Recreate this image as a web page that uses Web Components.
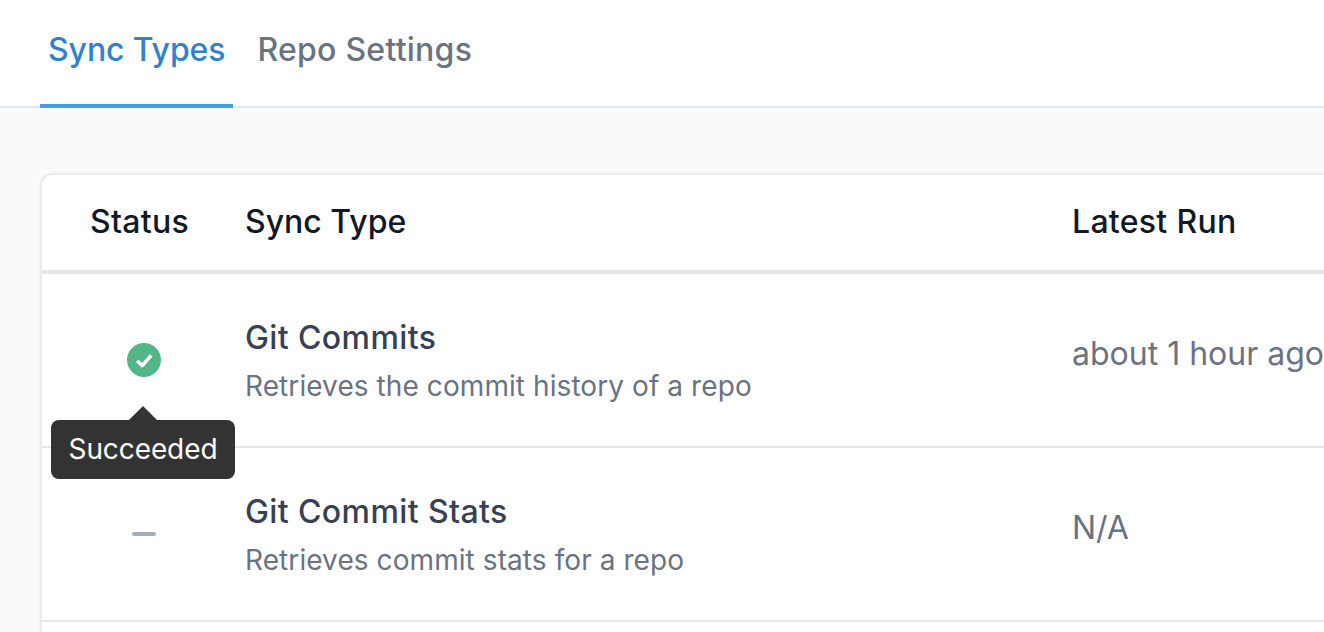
<!DOCTYPE html>
<html>
<head>
<meta charset="utf-8">
<title>Sync Types</title>
<style>
    html, body { margin: 0; height: 100%; overflow: hidden; }
    body { background: #f9fafb; font-family: Inter, "Liberation Sans", sans-serif; }
</style>
</head>
<body>
<sync-tabs>
    <sync-tab active>Sync Types</sync-tab>
    <sync-tab>Repo Settings</sync-tab>
</sync-tabs>
<sync-table>
    <sync-row status="ok" title="Git Commits" desc="Retrieves the commit history of a repo" run="about 1 hour ago"></sync-row>
    <sync-row status="none" title="Git Commit Stats" desc="Retrieves commit stats for a repo" run="N/A"></sync-row>
    <sync-row></sync-row>
</sync-table>
<script>
class SyncTabs extends HTMLElement {
    constructor() {
        super();
        this.attachShadow({mode: 'open'}).innerHTML = `
            <style>
                :host { display: flex; box-sizing: border-box; height: 108px; padding-left: 40px; background: #fff; border-bottom: 2px solid #e5e7eb; }
            </style>
            <slot></slot>
        `;
    }
}
customElements.define('sync-tabs', SyncTabs);

class SyncTab extends HTMLElement {
    constructor() {
        super();
        this.attachShadow({mode: 'open'}).innerHTML = `
            <style>
                :host { display: block; box-sizing: border-box; height: 108px; padding: 30px 8px 0 8px; font-size: 32px; line-height: 40px; font-weight: 500; letter-spacing: .25px; color: #6b7280; white-space: nowrap; }
                :host([active]) { color: #3182ce; border-bottom: 4px solid #41a1e3; margin-right: 16px; letter-spacing: -.1px; }
            </style>
            <slot></slot>
        `;
    }
}
customElements.define('sync-tab', SyncTab);

class SyncTable extends HTMLElement {
    constructor() {
        super();
        this.attachShadow({mode: 'open'}).innerHTML = `
            <style>
                :host { display: block; box-sizing: border-box; width: 1400px; margin: 65px 0 0 40px; background: #fff; border: 2px solid #e9ebef; border-right: 0; border-radius: 12px 0 0 0; box-shadow: 0 0 3px rgba(0, 0, 0, .05); }
                header { display: grid; grid-template-columns: 203px 827px 1fr; box-sizing: border-box; height: 99px; border-bottom: 4px solid #e5e7eb; font-size: 32px; line-height: 94px; font-weight: 500; color: #111827; }
                .status { padding-left: 48px; letter-spacing: .3px; }
                .latest { letter-spacing: .3px; }
            </style>
            <header>
                <div class="status">Status</div>
                <div>Sync Type</div>
                <div class="latest">Latest Run</div>
            </header>
            <slot></slot>
        `;
    }
}
customElements.define('sync-table', SyncTable);

class SyncRow extends HTMLElement {
    constructor() {
        super();
        this.attachShadow({mode: 'open'});
    }
    connectedCallback() {
        const status = this.getAttribute('status');
        const title = this.getAttribute('title') || '';
        const desc = this.getAttribute('desc') || '';
        const run = this.getAttribute('run') || '';
        this.removeAttribute('title');
        let icon = '';
        if (status === 'ok') {
            icon = `<svg width="34" height="34" viewBox="0 0 34 34"><circle cx="17" cy="17" r="17" fill="#52b686"/><path d="M10.2 17.8l5.1 4.8L24.2 12.4" fill="none" stroke="#fff" stroke-width="3.6" stroke-linejoin="round"/></svg><status-tip>Succeeded</status-tip>`;
        } else if (status === 'none') {
            icon = `<div class="dash"></div>`;
        }
        this.shadowRoot.innerHTML = `
            <style>
                :host { display: grid; grid-template-columns: 203px 827px 1fr; box-sizing: border-box; height: 174px; border-bottom: 2px solid #e5e7eb; align-items: center; }
                .icon { position: relative; display: flex; justify-content: center; align-items: center; width: 204px; height: 34px; }
                svg { display: block; }
                .dash { width: 24px; height: 4px; border-radius: 2px; background: #a0aec0; }
                .info { margin-top: 4px; }
                .title { font-size: 32px; line-height: 40px; font-weight: 500; letter-spacing: .4px; color: #374151; }
                .desc { margin-top: 8px; font-size: 28px; line-height: 40px; letter-spacing: .08px; color: #6b7280; }
                .run { margin-top: -12px; font-size: 32px; line-height: 40px; color: #6b7280; white-space: nowrap; }
            </style>
            <div class="icon">${icon}</div>
            <div class="info">
                <div class="title">${title}</div>
                <div class="desc">${desc}</div>
            </div>
            <div class="run">${run}</div>
        `;
    }
}
customElements.define('sync-row', SyncRow);

class StatusTip extends HTMLElement {
    constructor() {
        super();
        this.attachShadow({mode: 'open'}).innerHTML = `
            <style>
                :host { position: absolute; top: 77px; left: 9px; z-index: 2; box-sizing: border-box; width: 184px; height: 59px; border-radius: 8px; background: #333; color: #fff; font-size: 28px; line-height: 59px; letter-spacing: -.1px; text-align: center; }
                i { position: absolute; top: -14px; left: 78px; width: 0; height: 0; border: 14px solid transparent; border-top: 0; border-bottom-color: #333; }
            </style>
            <i></i><slot></slot>
        `;
    }
}
customElements.define('status-tip', StatusTip);
</script>
</body>
</html>
